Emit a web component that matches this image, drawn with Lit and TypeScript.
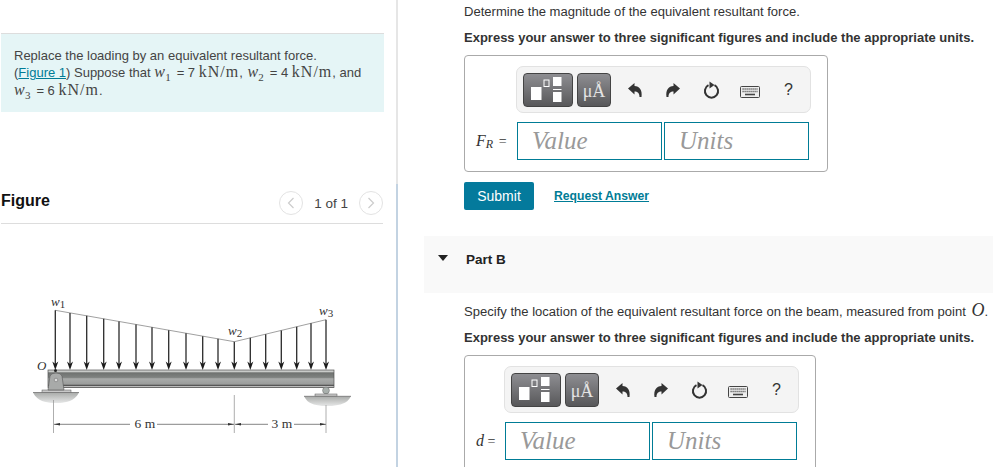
import { LitElement, html, css, svg } from "lit";
import { customElement, property } from "lit/decorators.js";

// shared toolbar glyphs
const undoIcon = svg`<path d="M1 6.5 L7.5 1 V4 C12.5 4 15.5 8 14.5 15 L12.5 15 C12.5 11 10.5 9.5 7.5 9.5 V12.5 Z" fill="#333"/>`;
const redoIcon = svg`<path d="M15 6.5 L8.5 1 V4 C3.5 4 .5 8 1.5 15 L3.5 15 C3.5 11 5.5 9.5 8.5 9.5 V12.5 Z" fill="#333"/>`;

@customElement("answer-box")
export class AnswerBox extends LitElement {
  static styles = css`
    :host {
      display: block;
      width: fit-content;
    }
    .box {
      border: 1px solid #aaa;
      border-radius: 4px;
      padding: 10px 16px 11px 11px;
      display: grid;
      row-gap: 9px;
      background: #fff;
    }
    .toolbar {
      grid-column: 2;
      display: flex;
      align-items: center;
      height: 45px;
      width: 287px;
      padding-left: 6px;
      border: 1px solid #e2e2e2;
      border-radius: 7px;
      background: #f4f4f4;
    }
    .toolbar-inner {
      display: flex;
      align-items: center;
    }
    .btn {
      height: 34px;
      box-sizing: border-box;
      border: 1px solid #444;
      border-radius: 4px;
      background: linear-gradient(#8e8e92, #58585a);
      display: flex;
      align-items: center;
      justify-content: center;
    }
    .btn.templates {
      width: 50px;
    }
    .btn.units {
      width: 34px;
      margin-left: 4px;
      padding-top: 4px;
      color: #e4e4e4;
      font: 18px "Liberation Serif", serif;
    }
    .slot {
      width: 38.3px;
      display: flex;
      justify-content: center;
      align-items: center;
      color: #333;
    }
    .slot.first {
      margin-left: 5px;
    }
    .slot.keys {
      padding-top: 4px;
    }
    .help {
      font: 16px "Liberation Sans", sans-serif;
    }
    .label {
      font: 14px "Liberation Serif", serif;
      color: #333;
      align-self: center;
      white-space: nowrap;
    }
    .label i {
      font-size: 16px;
    }
    .label sub {
      font-size: 12px;
      font-style: italic;
      line-height: 0;
      vertical-align: -2px;
      padding-right: 2px;
    }
    .inputs {
      display: flex;
      gap: 2px;
      margin-left: 1px;
    }
    input {
      width: 145px;
      height: 38px;
      box-sizing: border-box;
      border: 1px solid #007c96;
      border-radius: 0;
      padding: 0 0 0 14px;
      font: italic 25px "Liberation Serif", serif;
      outline: none;
    }
    input::placeholder {
      color: #999;
      opacity: 1;
    }
  `;

  @property() symbol = "";
  @property() sub = "";
  @property({ type: Number }) labelWidth = 28;

  render() {
    return html`
      <div class="box" style="grid-template-columns: ${this.labelWidth}px auto">
        <div class="toolbar">
          <div class="toolbar-inner">
            <div class="btn templates">
              <svg width="48" height="32" viewBox="0 0 48 32">
                <rect x="7" y="13" width="10.5" height="13" fill="#fff" />
                <rect x="20" y="6" width="5" height="6.5" fill="none" stroke="#fff" />
                <rect x="29" y="3" width="8.5" height="9" fill="#fff" />
                <rect x="29" y="15" width="8.5" height="1" fill="#fff" />
                <rect x="29" y="18" width="8.5" height="10" fill="#fff" />
              </svg>
            </div>
            <div class="btn units">μÅ</div>
            <div class="slot first">
              <svg width="16" height="16" viewBox="0 0 16 16">${undoIcon}</svg>
            </div>
            <div class="slot">
              <svg width="16" height="16" viewBox="0 0 16 16">${redoIcon}</svg>
            </div>
            <div class="slot">
              <svg width="18" height="18" viewBox="0 0 18 18">
                <path d="M11.5 4.2 A6.6 6.6 0 1 1 5.5 4.2" fill="none" stroke="#333" stroke-width="2" />
                <path d="M6.5 0.5 L11.5 4 L6.5 7.5 Z" fill="#333" />
              </svg>
            </div>
            <div class="slot keys">
              <svg width="20" height="12" viewBox="0 0 20 12">
                <rect x="0.5" y="0.5" width="19" height="11" rx="1" fill="#eee" stroke="#444" />
                <path d="M2.5 3 H17.5 M2.5 5.5 H17.5" stroke="#555" stroke-width="1.4" stroke-dasharray="1.2 .8" />
                <path d="M5 8.5 H15" stroke="#444" stroke-width="1.6" />
              </svg>
            </div>
            <div class="slot help">?</div>
          </div>
        </div>
        <div class="label"><i>${this.symbol}</i>${this.sub ? html`<sub>${this.sub}</sub>` : ""} =</div>
        <div class="inputs">
          <input placeholder="Value" />
          <input placeholder="Units" />
        </div>
      </div>
    `;
  }
}

@customElement("load-figure")
export class LoadFigure extends LitElement {
  static styles = css`
    :host {
      display: block;
    }
    svg {
      display: block;
    }
    text {
      font-family: "Liberation Serif", serif;
      fill: #333;
    }
  `;

  render() {
    const xs = [55.3, 70, 86.7, 103.7, 119, 136, 152, 168.7, 186, 202.7, 218, 234.3, 250.3, 265.7, 281.3, 296.7, 311, 326];
    const topY = (x: number) =>
      x <= 234.3 ? 310.3 + ((x - 55.3) / 179) * 31.4 : 341.7 - ((x - 234.3) / 91.7) * 22;
    return html`
      <svg width="384" height="243" viewBox="0 224 384 243">
        <defs>
          <linearGradient id="beam" x1="0" x2="0" y1="0" y2="1">
            <stop offset="0" stop-color="#c9cbc9" />
            <stop offset="0.1" stop-color="#c9cbc9" />
            <stop offset="0.16" stop-color="#6f7270" />
            <stop offset="0.42" stop-color="#7f8280" />
            <stop offset="0.5" stop-color="#a9abaa" />
            <stop offset="0.8" stop-color="#9b9d9c" />
            <stop offset="0.88" stop-color="#555" />
            <stop offset="0.92" stop-color="#d5d5d5" />
            <stop offset="1" stop-color="#666" />
          </linearGradient>
          <linearGradient id="ground" x1="0" x2="0" y1="0" y2="1">
            <stop offset="0" stop-color="#a9aba9" />
            <stop offset="1" stop-color="#e6e7e7" />
          </linearGradient>
        </defs>

        <!-- load outline -->
        <path d="M55.3 310.3 L234.3 341.7 L326 319.7" fill="none" stroke="#888" stroke-width="0.8" />
        ${xs.map(
          (x) => svg`
            <path d="M${x} ${topY(x)} V365" stroke="#2a2a2a" stroke-width="1.3" />
            <path d="M${x - 3} 361.5 L${x} 364 L${x + 3} 361.5 L${x} 370 Z" fill="#1c1c1c" />
          `
        )}

        <!-- beam -->
        <rect x="48" y="370" width="286" height="17.6" fill="url(#beam)" stroke="#555" stroke-width="0.7" />

        <!-- left support -->
        <path d="M33 392.5 H79 C74 402 66 402 60 403 H52 C46 402 38 402 33 392.5 Z" fill="url(#ground)" />
        <path d="M33 392.5 H79" stroke="#666" stroke-width="0.7" />
        <rect x="42" y="390" width="29" height="2.5" fill="#c8c8c8" stroke="#555" stroke-width="0.5" />
        <path d="M48 390 L50 376 Q51 373 56 373 Q61 373 62 376 L64 390 Z" fill="#a8aaa9" stroke="#555" stroke-width="0.6" />
        <circle cx="56" cy="380" r="1.8" fill="#ddd" stroke="#666" stroke-width="0.5" />
        <circle cx="55.5" cy="370.5" r="1.5" fill="#222" />

        <!-- right support -->
        <circle cx="326" cy="390.5" r="3.4" fill="#a9b0ad" stroke="#666" stroke-width="0.5" />
        <rect x="315" y="394" width="22" height="2.2" fill="#ccc" stroke="#555" stroke-width="0.5" />
        <path d="M304 396.3 H351 C347 404 340 405 332 406 H322 C314 405 308 404 304 396.3 Z" fill="url(#ground)" />
        <path d="M304 396.3 H351" stroke="#666" stroke-width="0.7" />

        <!-- dimensions -->
        <path d="M53.5 400 V433 M234.3 395 V433 M326 405 V433" stroke="#999" stroke-width="0.8" />
        <path d="M54 424.3 H130 M157 424.3 H234 M235 424.3 H268 M294 424.3 H326" stroke="#666" stroke-width="0.8" />
        <path d="M54 424.3 L60 423 V425.6 Z M234 424.3 L228 423 V425.6 Z M235 424.3 L241 423 V425.6 Z M326 424.3 L320 423 V425.6 Z" fill="#333" />
        <text x="134.5" y="428" font-size="13.5">6 m</text>
        <text x="271.5" y="428" font-size="13.5">3 m</text>

        <text x="51" y="306" font-size="13" font-style="italic">w<tspan font-size="11" font-style="normal" dy="2">1</tspan></text>
        <text x="228" y="335" font-size="13" font-style="italic">w<tspan font-size="11" font-style="normal" dy="2">2</tspan></text>
        <text x="319" y="315" font-size="13" font-style="italic">w<tspan font-size="11" font-style="normal" dy="2">3</tspan></text>
        <text x="37" y="370" font-size="13" font-style="italic">O</text>
      </svg>
    `;
  }
}

@customElement("app-root")
export class AppRoot extends LitElement {
  static styles = css`
    :host {
      display: flex;
      width: 993px;
      height: 467px;
      overflow: hidden;
      background: #fff;
      font-family: "Liberation Sans", Arial, sans-serif;
      color: #333;
    }
    .left {
      width: 396px;
      flex: none;
      padding-top: 33px;
      box-sizing: border-box;
    }
    .problem {
      margin-left: 1px;
      width: 383px;
      height: 79px;
      box-sizing: border-box;
      border-top: 1px solid #ddd;
      background: #e5f5f6;
      padding: 14px 13px 0;
      font-size: 13px;
      line-height: 16px;
      color: #444;
    }
    .problem span.line {
      display: block;
      white-space: nowrap;
    }
    .problem span.line.last {
      margin-top: 1px;
    }
    .problem a {
      color: #007c96;
      text-decoration: underline;
    }
    .math {
      font-family: "Liberation Serif", serif;
      font-size: 16px;
      letter-spacing: 0.3px;
    }
    .math.sym {
      padding-right: 2px;
    }
    .math.sym.next {
      margin-left: 1px;
    }
    .math.unit {
      letter-spacing: 1px;
    }
    .math sub {
      font-size: 11px;
      line-height: 0;
    }
    .figure-head {
      margin: 72px 0 0 1px;
      width: 382px;
      height: 40px;
      box-sizing: border-box;
      border-bottom: 1px solid #ddd;
      display: flex;
      align-items: flex-start;
      justify-content: space-between;
    }
    .figure-head h2 {
      margin: 0;
      font-size: 16px;
      line-height: 34px;
      color: #111;
    }
    .pager {
      display: flex;
      align-items: center;
      gap: 11px;
      margin-top: 7px;
      font-size: 13.5px;
      color: #444;
    }
    .round {
      width: 24px;
      height: 24px;
      box-sizing: border-box;
      border: 1px solid #e3e3e3;
      border-radius: 50%;
      display: flex;
      align-items: center;
      justify-content: center;
    }
    .divider {
      width: 2px;
      flex: none;
      display: flex;
      flex-direction: column;
    }
    .divider .top {
      height: 184px;
      background: #e6e6e6;
    }
    .divider .bottom {
      flex: 1;
      background: #c3d3e2;
    }
    .right {
      flex: 1;
      padding: 0 0 0 26px;
      font-size: 13.05px;
    }
    .indent {
      margin-left: 40px;
    }
    p {
      margin: 0;
      line-height: 16px;
      white-space: nowrap;
    }
    .q1 {
      padding-top: 4px;
    }
    .strong {
      font-weight: bold;
      font-size: 13px;
      margin-top: 10px;
    }
    answer-box {
      margin-top: 9px;
    }
    .actions {
      display: flex;
      align-items: center;
      gap: 20px;
      margin-top: 10px;
    }
    .submit {
      width: 70px;
      height: 28px;
      border: none;
      border-radius: 2px;
      background: #047a9c;
      color: #fff;
      font: 14px "Liberation Sans", sans-serif;
      padding: 0;
    }
    .actions a {
      color: #007c96;
      font-weight: bold;
      font-size: 12.2px;
      text-decoration: underline;
    }
    .part {
      margin-top: 26px;
      height: 57px;
      background: #f9f9f9;
      display: flex;
      align-items: flex-start;
      padding: 16px 0 0 14px;
      box-sizing: border-box;
      gap: 18px;
    }
    .tri {
      width: 0;
      height: 0;
      margin-top: 3px;
      border-left: 5.5px solid transparent;
      border-right: 5.5px solid transparent;
      border-top: 6px solid #222;
    }
    .part b {
      font-size: 13.5px;
      line-height: 16px;
      color: #222;
    }
    .q2 {
      margin-top: 11px;
    }
    .q2 i {
      font: italic 18px "Liberation Serif", serif;
      line-height: 0;
      padding-left: 2px;
    }
  `;

  render() {
    return html`
      <div class="left">
        <div class="problem">
          <span class="line">Replace the loading by an equivalent resultant force.</span>
          <span class="line"
            >(<a href="#">Figure 1</a>) Suppose that <span class="math sym"><i>w</i><sub>1</sub></span> = 7
            <span class="math unit">kN/m</span>, <span class="math sym next"><i>w</i><sub>2</sub></span> = 4
            <span class="math unit">kN/m</span>, and</span
          >
          <span class="line last"
            ><span class="math sym"><i>w</i><sub>3</sub></span> = 6 <span class="math unit">kN/m</span>.</span
          >
        </div>
        <div class="figure-head">
          <h2>Figure</h2>
          <div class="pager">
            <span class="round">
              <svg width="8" height="12" viewBox="0 0 8 12"><path d="M6.5 1 L1.5 6 L6.5 11" fill="none" stroke="#ccc" stroke-width="1.2" /></svg>
            </span>
            <span>1 of 1</span>
            <span class="round">
              <svg width="8" height="12" viewBox="0 0 8 12"><path d="M1.5 1 L6.5 6 L1.5 11" fill="none" stroke="#ccc" stroke-width="1.2" /></svg>
            </span>
          </div>
        </div>
        <load-figure></load-figure>
      </div>
      <div class="divider"><div class="top"></div><div class="bottom"></div></div>
      <div class="right">
        <div class="indent">
          <p class="q1">Determine the magnitude of the equivalent resultant force.</p>
          <p class="strong">Express your answer to three significant figures and include the appropriate units.</p>
          <answer-box symbol="F" sub="R" labelWidth="40"></answer-box>
          <div class="actions">
            <button class="submit">Submit</button>
            <a href="#">Request Answer</a>
          </div>
        </div>
        <div class="part">
          <span class="tri"></span>
          <b>Part B</b>
        </div>
        <div class="indent">
          <p class="q2">Specify the location of the equivalent resultant force on the beam, measured from point <i>O</i>.</p>
          <p class="strong">Express your answer to three significant figures and include the appropriate units.</p>
          <answer-box symbol="d" labelWidth="28"></answer-box>
        </div>
      </div>
    `;
  }
}
